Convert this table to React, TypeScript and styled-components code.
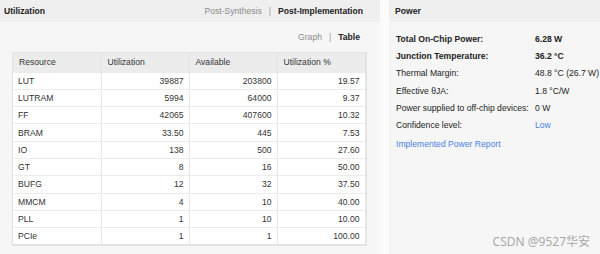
import styled, { createGlobalStyle } from "styled-components";

const GlobalStyle = createGlobalStyle`
  body {
    margin: 0;
    background: #fbfbfb;
    font-family: "Liberation Sans", Arial, sans-serif;
    font-size: 8.6px;
    color: #333;
  }
`;

const Page = styled.div`
  width: 600px;
  height: 254px;
  display: flex;
  gap: 9px;
  overflow: hidden;
  position: relative;
`;

const Panel = styled.div<{ width?: number }>`
  background: #f6f6f6;
  display: flex;
  flex-direction: column;
  ${(p) => (p.width ? `width: ${p.width}px;` : "flex: 1;")}
`;

const PanelHeader = styled.div<{ pad: number }>`
  height: 22px;
  background: #efefef;
  display: flex;
  align-items: center;
  justify-content: space-between;
  padding: 0 17px 0 ${(p) => p.pad}px;
`;

const Title = styled.span`
  font-weight: bold;
  color: #222;
`;

const Switcher = styled.div`
  display: flex;
  align-items: center;
  gap: 7px;
`;

const SwitchItem = styled.span<{ active?: boolean }>`
  color: ${(p) => (p.active ? "#222" : "#8a8a8a")};
  font-weight: ${(p) => (p.active ? "bold" : "normal")};
`;

const Sep = styled.span`
  color: #999;
`;

const LeftBody = styled.div`
  padding: 0 13px 0 12px;
  display: flex;
  flex-direction: column;
`;

const ViewRow = styled.div`
  height: 30px;
  display: flex;
  justify-content: flex-end;
  align-items: center;
  padding-right: 7px;
`;

const TableFrame = styled.div`
  border: 2px solid #e3e3e3;
  border-top: 1px solid #e3e3e3;
  border-left: 1px solid #e3e3e3;
  background: #fff;
  width: 352px;
`;

const Table = styled.table`
  border-collapse: collapse;
  width: 100%;
  table-layout: fixed;
`;

const Th = styled.th<{ w: number }>`
  box-sizing: border-box;
  width: ${(p) => p.w}px;
  background: #ececec;
  font-weight: normal;
  text-align: left;
  height: 19px;
  padding: 0 6px;
  border-right: 1px solid #e2e2e2;
  color: #333;
`;

const Td = styled.td<{ num?: boolean }>`
  height: 16.3px;
  padding: 0 5px;
  text-align: ${(p) => (p.num ? "right" : "left")};
  border-right: 1px solid #e8e8e8;
  border-top: 1px solid #ececec;
  color: #333;
`;

const RightBody = styled.div`
  padding: 8px 0 0 7px;
  display: flex;
  flex-direction: column;
`;

const InfoRow = styled.div`
  height: 17.3px;
  display: flex;
  align-items: center;
`;

const Label = styled.span<{ bold?: boolean }>`
  width: 139px;
  flex-shrink: 0;
  font-weight: ${(p) => (p.bold ? "bold" : "normal")};
  color: #222;
  white-space: nowrap;
`;

const Value = styled.span<{ bold?: boolean; link?: boolean }>`
  font-weight: ${(p) => (p.bold ? "bold" : "normal")};
  color: ${(p) => (p.link ? "#4a7fe0" : "#222")};
  white-space: nowrap;
`;

const Link = styled.a`
  color: #4a7fe0;
  text-decoration: none;
  margin-top: 2px;
  height: 17px;
  display: flex;
  align-items: center;
`;

const Watermark = styled.div`
  position: absolute;
  right: 10px;
  bottom: 4px;
  font-family: "Noto Sans", "Noto Sans CJK SC", sans-serif;
  font-size: 12px;
  color: #a8a8a8;
`;

const rows: [string, string, string, string][] = [
  ["LUT", "39887", "203800", "19.57"],
  ["LUTRAM", "5994", "64000", "9.37"],
  ["FF", "42065", "407600", "10.32"],
  ["BRAM", "33.50", "445", "7.53"],
  ["IO", "138", "500", "27.60"],
  ["GT", "8", "16", "50.00"],
  ["BUFG", "12", "32", "37.50"],
  ["MMCM", "4", "10", "40.00"],
  ["PLL", "1", "10", "10.00"],
  ["PCIe", "1", "1", "100.00"],
];

const power: { label: string; value: string; bold?: boolean; link?: boolean }[] = [
  { label: "Total On-Chip Power:", value: "6.28 W", bold: true },
  { label: "Junction Temperature:", value: "36.2 °C", bold: true },
  { label: "Thermal Margin:", value: "48.8 °C (26.7 W)" },
  { label: "Effective θJA:", value: "1.8 °C/W" },
  { label: "Power supplied to off-chip devices:", value: "0 W" },
  { label: "Confidence level:", value: "Low", link: true },
];

export default function App() {
  return (
    <Page>
      <GlobalStyle />
      <Panel width={380}>
        <PanelHeader pad={4}>
          <Title>Utilization</Title>
          <Switcher>
            <SwitchItem>Post-Synthesis</SwitchItem>
            <Sep>|</Sep>
            <SwitchItem active>Post-Implementation</SwitchItem>
          </Switcher>
        </PanelHeader>
        <LeftBody>
          <ViewRow>
            <Switcher>
              <SwitchItem>Graph</SwitchItem>
              <Sep>|</Sep>
              <SwitchItem active>Table</SwitchItem>
            </Switcher>
          </ViewRow>
          <TableFrame>
            <Table>
              <thead>
                <tr>
                  <Th w={88}>Resource</Th>
                  <Th w={88}>Utilization</Th>
                  <Th w={88}>Available</Th>
                  <Th w={88}>Utilization %</Th>
                </tr>
              </thead>
              <tbody>
                {rows.map((r) => (
                  <tr key={r[0]}>
                    <Td>{r[0]}</Td>
                    <Td num>{r[1]}</Td>
                    <Td num>{r[2]}</Td>
                    <Td num>{r[3]}</Td>
                  </tr>
                ))}
              </tbody>
            </Table>
          </TableFrame>
        </LeftBody>
      </Panel>
      <Panel>
        <PanelHeader pad={6}>
          <Title>Power</Title>
        </PanelHeader>
        <RightBody>
          {power.map((p) => (
            <InfoRow key={p.label}>
              <Label bold={p.bold}>{p.label}</Label>
              <Value bold={p.bold} link={p.link}>
                {p.value}
              </Value>
            </InfoRow>
          ))}
          <Link href="#">Implemented Power Report</Link>
        </RightBody>
      </Panel>
      <Watermark>CSDN @9527华安</Watermark>
    </Page>
  );
}
